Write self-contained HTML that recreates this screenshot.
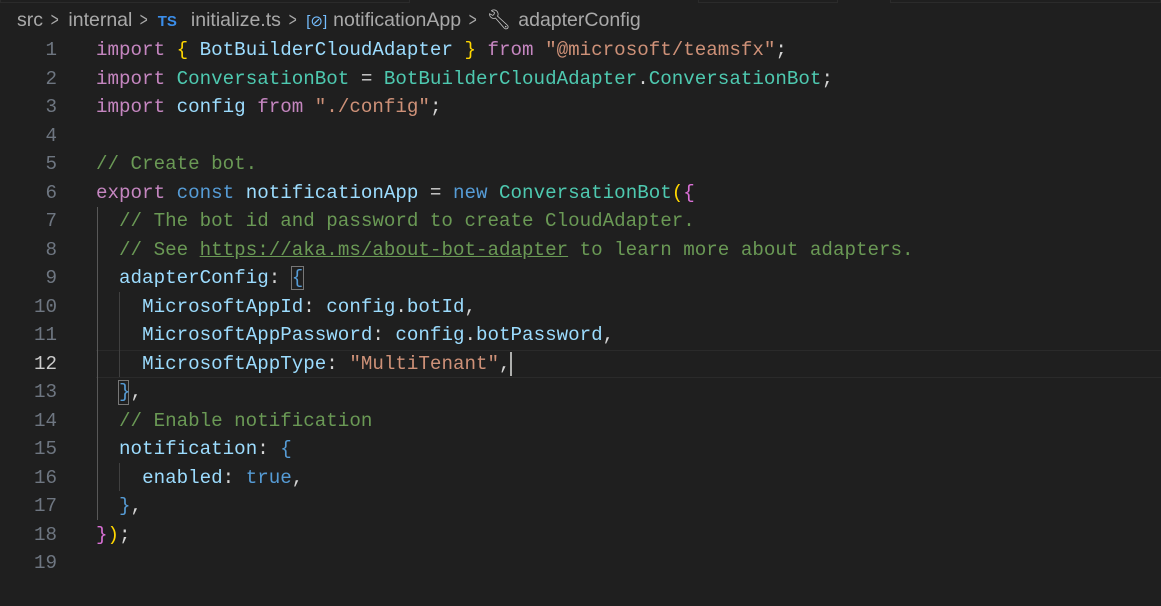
<!DOCTYPE html>
<html><head><meta charset="utf-8"><style>
html,body{margin:0;padding:0;background:#1f1f1f;width:1161px;height:558px;overflow:hidden}
.top{position:absolute;left:0;top:0;width:1161px;height:3px}
.top i{position:absolute;top:0;height:3px;border:1px solid #2b2b2b;border-top:none;box-sizing:border-box}
.bc{position:absolute;left:17px;top:8px;font:19.5px "Liberation Sans",sans-serif;color:#a9a9a9;white-space:nowrap}
.bc span{display:inline-block}
.bc .ts{color:#3b8eea;font-weight:bold;font-size:15px;margin-right:14px}
.bc .sep{color:#a9a9a9;margin:0 8px 0 6px;transform:scaleX(0.7)}
.code{position:absolute;left:0;top:36px;font:19.2px/28.5px "Liberation Mono",monospace;white-space:pre;color:#d4d4d4}
.ln{position:absolute;left:0;width:57px;text-align:right;color:#6e7681}
.ln.cur{color:#cccccc}
.tx{position:absolute;left:96px}
.k{color:#c586c0}.y{color:#ffd700}.v{color:#9cdcfe}.s{color:#ce9178}.c{color:#6a9955}.b{color:#569cd6}.t{color:#4ec9b0}.p{color:#da70d6}.u{text-decoration:underline}
.cl{position:absolute;left:96px;width:1065px;height:28px;border:1px solid #2a2a2a;border-left:none;border-right:none;box-sizing:border-box;background:#1f1f1f}
.g{position:absolute;width:1px;background:#404040}
</style></head><body>
<div class="top"><i style="left:0;width:410px"></i><i style="left:698px;width:140px"></i><i style="left:890px;width:271px"></i></div>
<div class="bc">src<span class="sep">&gt;</span>internal<span class="sep">&gt;</span><span class="ts">TS</span>initialize.ts<span class="sep">&gt;</span><span style="color:#75beff;font-size:15px;margin-right:6px">[⊘]</span>notificationApp<span class="sep">&gt;</span><span style="color:#cccccc;margin-right:7px">🔧︎</span>adapterConfig</div>
<div class="cl" style="top:350px"></div>
<div class="g" style="left:97px;top:207px;height:313px;background:#585858"></div>
<div class="g" style="left:119px;top:292px;height:85px"></div>
<div class="g" style="left:119px;top:463px;height:28px"></div>
<div style="position:absolute;left:118px;top:380px;width:11px;height:25px;border:1px solid #777;box-sizing:border-box"></div>
<div style="position:absolute;left:510px;top:352px;width:2px;height:24px;background:#aeafad"></div>
<div class="code">
<div class="ln" style="top:0">1</div><div class="tx" style="top:0"><span class="k">import</span> <span class="y">{</span> <span class="v">BotBuilderCloudAdapter</span> <span class="y">}</span> <span class="k">from</span> <span class="s">"@microsoft/teamsfx"</span>;</div>
<div class="ln" style="top:28.5px">2</div><div class="tx" style="top:28.5px"><span class="k">import</span> <span class="t">ConversationBot</span> = <span class="t">BotBuilderCloudAdapter</span>.<span class="t">ConversationBot</span>;</div>
<div class="ln" style="top:57px">3</div><div class="tx" style="top:57px"><span class="k">import</span> <span class="v">config</span> <span class="k">from</span> <span class="s">"./config"</span>;</div>
<div class="ln" style="top:85.5px">4</div>
<div class="ln" style="top:114px">5</div><div class="tx c" style="top:114px">// Create bot.</div>
<div class="ln" style="top:142.5px">6</div><div class="tx" style="top:142.5px"><span class="k">export</span> <span class="b">const</span> <span class="v">notificationApp</span> = <span class="b">new</span> <span class="t">ConversationBot</span><span class="y">(</span><span class="p">{</span></div>
<div class="ln" style="top:171px">7</div><div class="tx c" style="top:171px">  // The bot id and password to create CloudAdapter.</div>
<div class="ln" style="top:199.5px">8</div><div class="tx c" style="top:199.5px">  // See <span class="u">https://aka.ms/about-bot-adapter</span> to learn more about adapters.</div>
<div class="ln" style="top:228px">9</div><div class="tx" style="top:228px">  <span class="v">adapterConfig</span>: <span class="b" style="outline:1px solid #777">{</span></div>
<div class="ln" style="top:256.5px">10</div><div class="tx" style="top:256.5px">    <span class="v">MicrosoftAppId</span>: <span class="v">config</span>.<span class="v">botId</span>,</div>
<div class="ln" style="top:285px">11</div><div class="tx" style="top:285px">    <span class="v">MicrosoftAppPassword</span>: <span class="v">config</span>.<span class="v">botPassword</span>,</div>
<div class="ln cur" style="top:313.5px">12</div><div class="tx" style="top:313.5px">    <span class="v">MicrosoftAppType</span>: <span class="s">"MultiTenant"</span>,</div>
<div class="ln" style="top:342px">13</div><div class="tx" style="top:342px">  <span class="b">}</span>,</div>
<div class="ln" style="top:370.5px">14</div><div class="tx c" style="top:370.5px">  // Enable notification</div>
<div class="ln" style="top:399px">15</div><div class="tx" style="top:399px">  <span class="v">notification</span>: <span class="b">{</span></div>
<div class="ln" style="top:427.5px">16</div><div class="tx" style="top:427.5px">    <span class="v">enabled</span>: <span class="b">true</span>,</div>
<div class="ln" style="top:456px">17</div><div class="tx" style="top:456px">  <span class="b">}</span>,</div>
<div class="ln" style="top:484.5px">18</div><div class="tx" style="top:484.5px"><span class="p">}</span><span class="y">)</span>;</div>
<div class="ln" style="top:513px">19</div>
</div>
</body></html>
